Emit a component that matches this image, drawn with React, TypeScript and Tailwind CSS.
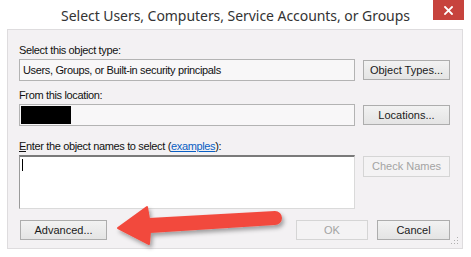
import React from "react";

const ui = { fontFamily: '"Liberation Sans", Arial, sans-serif' } as React.CSSProperties;

function Btn({ children, disabled, className = "" }: { children: React.ReactNode; disabled?: boolean; className?: string }) {
  return (
    <div
      className={
        "flex items-center justify-center border text-[11px] leading-none " +
        (disabled
          ? "border-[#d5d5d5] bg-[#f4f3f4] text-[#a3a3a3] "
          : "border-[#adadad] bg-gradient-to-b from-[#f2f2f2] to-[#e4e4e4] text-[#1a1a1a] ") +
        className
      }
    >
      {children}
    </div>
  );
}

export default function App() {
  return (
    <div className="relative w-[471px] h-[257px] bg-white overflow-hidden" style={ui}>
      {/* title bar */}
      <div className="relative h-[29px] flex items-start justify-center">
        <div
          className="mt-[5px] text-[14px] text-[#333333] tracking-[-0.05px]"
          style={{ fontFamily: '"Noto Sans", "Open Sans", sans-serif' }}
        >
          Select Users, Computers, Service Accounts, or Groups
        </div>
        <div className="absolute right-[7px] top-0 w-[31px] h-[20px] bg-[#c7433d] flex items-center justify-center">
          <svg width="9" height="9" viewBox="0 0 9 9">
            <path d="M1 1 L8 8 M8 1 L1 8" stroke="white" strokeWidth="1.8" strokeLinecap="square" />
          </svg>
        </div>
      </div>

      {/* panel */}
      <div className="relative ml-[7px] w-[456px] h-[220px] border border-[#dedcde] bg-[#f3f1f3] pl-[11px] pt-[14px]">
        <div className="text-[11px] leading-[13px] text-[#111] h-[15px] tracking-[-0.35px]">Select this object type:</div>
        <div className="flex items-start">
          <div className="w-[336px] h-[22px] border border-[#b3b3b3] bg-[#f8f7f8] flex items-center pl-[3px] text-[11px] text-[#111] tracking-[-0.35px]">
            Users, Groups, or Built-in security principals
          </div>
          <Btn className="ml-[8px] mt-[1px] w-[87px] h-[20px]">Object Types...</Btn>
        </div>

        <div className="mt-[8px] text-[11px] leading-[13px] text-[#111] h-[15px] tracking-[-0.35px]">From this location:</div>
        <div className="flex items-start">
          <div className="w-[336px] h-[22px] border border-[#b3b3b3] bg-[#f8f7f8] flex items-center pl-[1px]">
            <div className="w-[50px] h-[18px] bg-black" />
          </div>
          <Btn className="ml-[8px] mt-[1px] w-[87px] h-[20px]">Locations...</Btn>
        </div>

        <div className="mt-[14px] text-[11px] leading-[13px] text-[#111] h-[15px] tracking-[-0.35px]">
          <span className="underline">E</span>nter the object names to select (
          <span className="text-[#0a5fc4] underline">examples</span>):
        </div>
        <div className="flex items-start">
          <div className="relative w-[336px] h-[54px] bg-white border border-[#dadada] border-t-[#7a7a7a] border-l-[#9a9a9a] border-t-2">
            <div className="absolute left-[2px] top-[2px] w-px h-[12px] bg-black" />
          </div>
          <Btn disabled className="ml-[8px] mt-[1px] w-[87px] h-[21px]">Check Names</Btn>
        </div>

        <div className="mt-[11px] flex items-start">
          <Btn className="ml-[1px] w-[87px] h-[20px]">Advanced...</Btn>
          <div className="flex-1" />
          <Btn disabled className="w-[72px] h-[20px]">OK</Btn>
          <Btn className="ml-[9px] mr-[12px] w-[73px] h-[20px]">Cancel</Btn>
        </div>

        {/* resize grip */}
        <svg className="absolute right-[3px] bottom-[3px]" width="8" height="8" viewBox="0 0 8 8">
          <g fill="#b0b0b0">
            <rect x="6" y="0" width="1" height="1" />
            <rect x="3" y="3" width="1" height="1" />
            <rect x="6" y="3" width="1" height="1" />
            <rect x="0" y="6" width="1" height="1" />
            <rect x="3" y="6" width="1" height="1" />
            <rect x="6" y="6" width="1" height="1" />
          </g>
        </svg>
      </div>

      {/* red annotation arrow */}
      <svg className="absolute left-0 top-0 pointer-events-none" width="471" height="257" viewBox="0 0 471 257">
        <defs>
          <filter id="sh" x="-20%" y="-50%" width="140%" height="200%">
            <feDropShadow dx="2" dy="3" stdDeviation="2" floodColor="#000" floodOpacity="0.35" />
          </filter>
        </defs>
        <path
          d="M118 228 L147 207 L149 219 L275 212 A6 6 0 0 1 275 224 L150 232 L149 244 Z"
          fill="#f24a3e"
          stroke="#f24a3e"
          strokeWidth="2"
          strokeLinejoin="round"
          filter="url(#sh)"
        />
      </svg>
    </div>
  );
}
